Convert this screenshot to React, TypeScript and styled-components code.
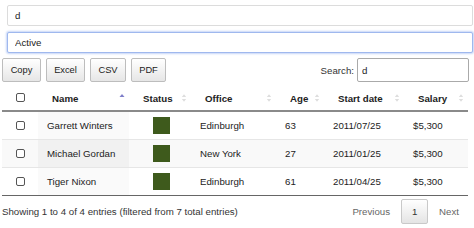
import React from "react";
import styled, { createGlobalStyle } from "styled-components";

type Row = {
  name: string;
  office: string;
  age: number;
  start: string;
  salary: string;
};

const rows: Row[] = [
  { name: "Garrett Winters", office: "Edinburgh", age: 63, start: "2011/07/25", salary: "$5,300" },
  { name: "Michael Gordan", office: "New York", age: 27, start: "2011/01/25", salary: "$5,300" },
  { name: "Tiger Nixon", office: "Edinburgh", age: 61, start: "2011/04/25", salary: "$5,300" },
];

const columns = [
  { key: "check", label: "", width: 36, sort: "none" },
  { key: "name", label: "Name", width: 91, sort: "asc" },
  { key: "status", label: "Status", width: 62, sort: "both" },
  { key: "office", label: "Office", width: 85, sort: "both" },
  { key: "age", label: "Age", width: 48, sort: "both" },
  { key: "start", label: "Start date", width: 80, sort: "both" },
  { key: "salary", label: "Salary", width: 64, sort: "both" },
];

const GlobalStyle = createGlobalStyle`
  html, body {
    margin: 0;
    padding: 0;
    background: #fff;
    font-family: "Liberation Sans", Arial, sans-serif;
    font-size: 9.7px;
    color: #333;
  }
`;

const Page = styled.div`
  width: 474px;
  height: 228px;
  padding: 5px 0 0 2px;
  box-sizing: border-box;
  overflow: hidden;
`;

const FilterStack = styled.div`
  display: flex;
  flex-direction: column;
  gap: 6px;
  margin-left: 5px;
  width: 466px;
`;

const FilterInput = styled.input<{ $focused?: boolean }>`
  box-sizing: border-box;
  height: 21px;
  width: 100%;
  padding: 0 7px;
  font-family: inherit;
  font-size: 9.7px;
  color: #222;
  border: 1px solid ${(p) => (p.$focused ? "#9fb8ee" : "#dcdcdc")};
  border-radius: 2px;
  box-shadow: ${(p) => (p.$focused ? "0 0 2px 1px #c6d6f7" : "none")};
  outline: none;
  background: #fff;
`;

const Toolbar = styled.div`
  display: flex;
  justify-content: space-between;
  align-items: center;
  width: 466px;
  margin-top: 5px;
  height: 24px;
`;

const ButtonGroup = styled.div`
  display: flex;
  gap: 5px;
`;

const ToolButton = styled.button<{ $w: number }>`
  box-sizing: border-box;
  width: ${(p) => p.$w}px;
  height: 24px;
  padding: 0;
  font-family: inherit;
  font-size: 9.3px;
  color: #222;
  border: 1px solid #bdbdbd;
  border-radius: 2px;
  background: linear-gradient(to bottom, #ffffff 0%, #e6e6e6 100%);
`;

const SearchLabel = styled.label`
  display: flex;
  align-items: center;
  gap: 3px;
  font-size: 9.7px;
  color: #333;
  margin-right: -1px;
`;

const SearchInput = styled.input`
  box-sizing: border-box;
  width: 112px;
  height: 24px;
  padding: 0 4px;
  font-family: inherit;
  font-size: 9.7px;
  color: #222;
  border: 1px solid #aaa;
  border-radius: 2px;
  outline: none;
`;

const Table = styled.table`
  margin-top: 4px;
  width: 466px;
  border-collapse: collapse;
  table-layout: fixed;
  border-bottom: 1px solid #666;
`;

const HeadCell = styled.th`
  position: relative;
  height: 24px;
  padding: 0 0 0 14px;
  text-align: left;
  font-weight: bold;
  font-size: 9.7px;
  color: #222;
  border-bottom: 2px solid #8a8a8a;
`;

const CheckHeadCell = styled(HeadCell)`
  padding: 0;
  text-align: center;
`;

const SortMark = styled.span`
  position: absolute;
  right: 4px;
  top: 50%;
  transform: translateY(-50%);
  display: flex;
`;

const BodyRow = styled.tr<{ $stripe: boolean }>`
  background: ${(p) => (p.$stripe ? "#f9f9f9" : "#fff")};
`;

const Cell = styled.td<{ $sorted?: boolean; $stripe?: boolean }>`
  height: 27px;
  padding: 0 0 0 9px;
  font-size: 9.7px;
  color: #222;
  border-top: 1px solid #e6e6e6;
  white-space: nowrap;
  background: ${(p) => (p.$sorted ? (p.$stripe ? "#f1f1f1" : "#fafafa") : "transparent")};
`;

const CheckCell = styled(Cell)`
  padding: 0;
  text-align: center;
`;

const StatusCell = styled(Cell)`
  padding: 0;
`;

const StatusSwatch = styled.div`
  width: 17px;
  height: 17px;
  margin-left: 24px;
  background: #3e5a1c;
`;

const Check = styled.span`
  display: inline-block;
  box-sizing: border-box;
  width: 9px;
  height: 9px;
  border: 1px solid #555;
  border-radius: 2px;
  background: #fff;
  vertical-align: middle;
  margin-top: -2px;
`;

const Footer = styled.div`
  display: flex;
  justify-content: space-between;
  align-items: center;
  width: 466px;
  margin-top: 3px;
`;

const Info = styled.div`
  font-size: 9.7px;
  color: #333;
`;

const Pager = styled.div`
  display: flex;
  align-items: center;
  margin-right: -2px;
`;

const PageLink = styled.span`
  font-size: 9.7px;
  color: #666;
  padding: 0 11px;
`;

const PageCurrent = styled.span`
  box-sizing: border-box;
  display: flex;
  align-items: center;
  justify-content: center;
  width: 27px;
  height: 25px;
  font-size: 9.7px;
  color: #333;
  border: 1px solid #c9c9c9;
  border-radius: 2px;
  background: linear-gradient(to bottom, #ffffff 0%, #e4e4e4 100%);
`;

const SortIcon = ({ kind }: { kind: string }) => {
  if (kind === "asc") {
    return (
      <svg width="6" height="10" viewBox="0 0 6 10">
        <path d="M0.5 4 L3 1 L5.5 4 Z" fill="#7e7ec9" />
      </svg>
    );
  }
  return (
    <svg width="6" height="10" viewBox="0 0 6 10">
      <path d="M0.8 4 L3 1.3 L5.2 4 Z" fill="#dedede" />
      <path d="M0.8 6 L3 8.7 L5.2 6 Z" fill="#dedede" />
    </svg>
  );
};

export default function App() {
  return (
    <>
      <GlobalStyle />
      <Page>
        <FilterStack>
          <FilterInput defaultValue="d" />
          <FilterInput $focused defaultValue="Active" />
        </FilterStack>
        <Toolbar>
          <ButtonGroup>
            <ToolButton $w={39}>Copy</ToolButton>
            <ToolButton $w={39}>Excel</ToolButton>
            <ToolButton $w={36}>CSV</ToolButton>
            <ToolButton $w={35}>PDF</ToolButton>
          </ButtonGroup>
          <SearchLabel>
            Search:
            <SearchInput defaultValue="d" />
          </SearchLabel>
        </Toolbar>
        <Table>
          <colgroup>
            {columns.map((c) => (
              <col key={c.key} style={{ width: c.width }} />
            ))}
          </colgroup>
          <thead>
            <tr>
              {columns.map((c) =>
                c.key === "check" ? (
                  <CheckHeadCell key={c.key}>
                    <Check />
                  </CheckHeadCell>
                ) : (
                  <HeadCell key={c.key}>
                    {c.label}
                    <SortMark>
                      <SortIcon kind={c.sort} />
                    </SortMark>
                  </HeadCell>
                )
              )}
            </tr>
          </thead>
          <tbody>
            {rows.map((r, i) => {
              const stripe = i % 2 === 1;
              return (
                <BodyRow key={r.name} $stripe={stripe}>
                  <CheckCell>
                    <Check />
                  </CheckCell>
                  <Cell $sorted $stripe={stripe}>
                    {r.name}
                  </Cell>
                  <StatusCell>
                    <StatusSwatch />
                  </StatusCell>
                  <Cell>{r.office}</Cell>
                  <Cell>{r.age}</Cell>
                  <Cell>{r.start}</Cell>
                  <Cell>{r.salary}</Cell>
                </BodyRow>
              );
            })}
          </tbody>
        </Table>
        <Footer>
          <Info>Showing 1 to 4 of 4 entries (filtered from 7 total entries)</Info>
          <Pager>
            <PageLink>Previous</PageLink>
            <PageCurrent>1</PageCurrent>
            <PageLink>Next</PageLink>
          </Pager>
        </Footer>
      </Page>
    </>
  );
}
